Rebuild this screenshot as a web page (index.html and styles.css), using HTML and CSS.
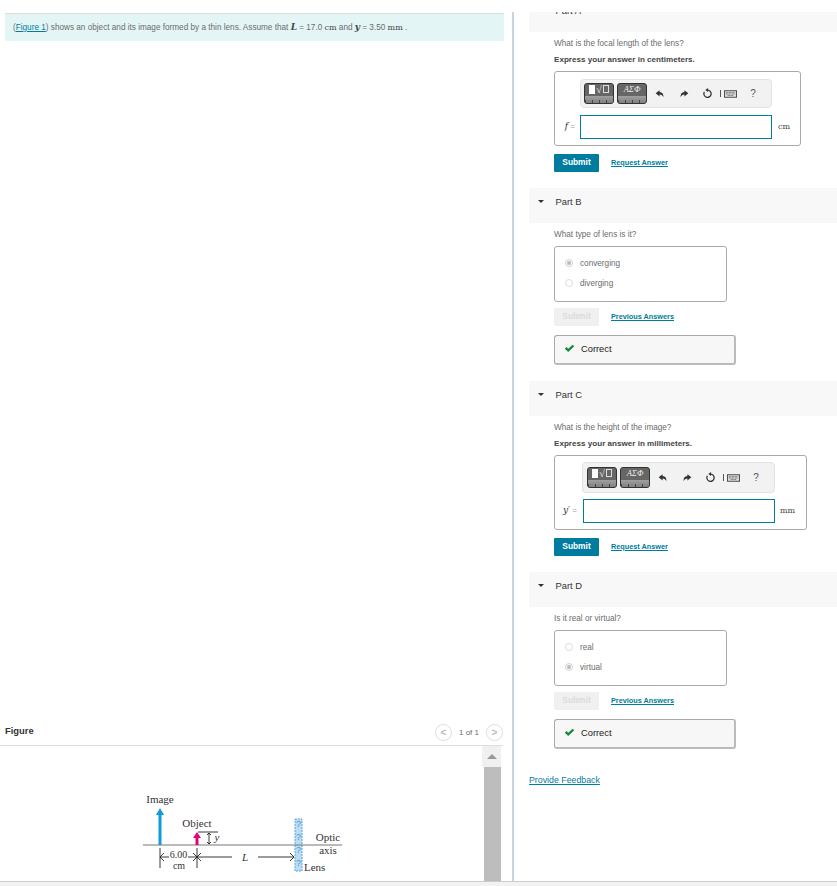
FILE: index.html
```html
<!DOCTYPE html>
<html lang="en">
<head>
    <meta charset="UTF-8">
    <meta name="viewport" content="width=device-width, initial-scale=1.0">
    <title>Thin Lens Problem</title>
    <link rel="stylesheet" href="styles.css">
</head>
<body>
    <svg class="defs" width="0" height="0">
        <symbol id="i-undo" viewBox="0 0 12 12"><path d="M5.5 1.5 0.8 5.2 5.5 8.9V6.6c2.4 0 3.6 1 4.6 3.4 0.4-3.6-1.2-6-4.6-6.3z"/></symbol>
        <symbol id="i-redo" viewBox="0 0 12 12"><path d="M6.5 1.5 11.2 5.2 6.5 8.9V6.6c-2.4 0-3.6 1-4.6 3.4-0.4-3.6 1.2-6 4.6-6.3z"/></symbol>
        <symbol id="i-reset" viewBox="0 0 12 12"><path d="M6 2.2a4 4 0 1 1-3.4 1.9" fill="none" stroke="currentColor" stroke-width="1.4"/><path d="M6.6 0 6.6 4.4 3.6 2.2z"/></symbol>
        <symbol id="i-keys" viewBox="0 0 14 8"><rect x="0.5" y="0.5" width="13" height="7" fill="#ddd" stroke="#444"/><path d="M2 2.5h10M2 4h10M4 5.6h6" stroke="#666" stroke-dasharray="1 .6"/></symbol>
        <symbol id="i-check" viewBox="0 0 12 10"><path d="M0.8 5.2 2.6 3.4 4.6 5.4 9.6 0.8 11.2 2.4 4.6 9z"/></symbol>
    </svg>

    <div class="page">
        <div class="left">
            <div class="intro">
                (<a href="#">Figure 1</a>) shows an object and its image formed by a thin lens. Assume that
                <span class="math math-i">L</span> = 17.0 <span class="math">cm</span> and
                <span class="math math-i">y</span> = 3.50 <span class="math">mm</span> .
            </div>

            <div class="figure">
                <div class="figure-head">
                    <span class="figure-title">Figure</span>
                    <div class="pager">
                        <span class="pager-btn">&lt;</span>
                        <span class="pager-count">1 of 1</span>
                        <span class="pager-btn">&gt;</span>
                    </div>
                </div>
                <div class="figure-body">
                    <svg class="diagram" width="482" height="135" viewBox="0 746 482 135">
                        <g class="dia-text">
                            <text x="160" y="803" text-anchor="middle">Image</text>
                            <text x="197" y="827" text-anchor="middle">Object</text>
                            <text x="217" y="841" text-anchor="middle" class="dia-var">y</text>
                            <text x="328" y="841" text-anchor="middle">Optic</text>
                            <text x="328" y="854" text-anchor="middle">axis</text>
                            <text x="178.5" y="857.5" text-anchor="middle" class="dia-dim">6.00</text>
                            <text x="179" y="869" text-anchor="middle" class="dia-dim">cm</text>
                            <text x="245" y="861" text-anchor="middle" class="dia-var">L</text>
                            <text x="304" y="871">Lens</text>
                        </g>
                        <rect x="295" y="819" width="7" height="52" fill="#bcdcf2" stroke="#5aa7dc" stroke-dasharray="2 1"/>
                        <g class="dia-q">
                            <text x="298.5" y="827" text-anchor="middle">?</text>
                            <text x="298.5" y="840" text-anchor="middle">?</text>
                            <text x="298.5" y="853" text-anchor="middle">?</text>
                            <text x="298.5" y="866" text-anchor="middle">?</text>
                        </g>
                        <path d="M143 845H342" stroke="#777" stroke-width="1.2"/>
                        <path d="M158.5 845V813H161.5V845z" fill="#0f9ad8"/>
                        <path d="M160 808 164 815H156z" fill="#0f9ad8"/>
                        <path d="M195.5 845V837H198.5V845z" fill="#e6007e"/>
                        <path d="M197 832 201 838H193z" fill="#e6007e"/>
                        <g fill="none" stroke="#222" stroke-width="0.9">
                            <path d="M198 832H218"/>
                            <path d="M209 833V844M207 835 209 833 211 835M207 842 209 844 211 842"/>
                            <path d="M160 848V868M197 848V868"/>
                            <path d="M160 857H169M164 853 160 857 164 861"/>
                            <path d="M188 857H197M193 853 197 857 193 861"/>
                            <path d="M197 857H232M201 853 197 857 201 861"/>
                            <path d="M258 857H294M290 853 294 857 290 861"/>
                        </g>
                    </svg>
                    <div class="scrollbar">
                        <div class="scroll-up"></div>
                        <div class="scroll-thumb"></div>
                    </div>
                </div>
            </div>
        </div>

        <div class="right">
            <div class="parts">
                <section class="part">
                    <div class="part-head"><span class="caret"></span>Part A</div>
                    <div class="part-body">
                        <p class="question">What is the focal length of the lens?</p>
                        <p class="express">Express your answer in centimeters.</p>
                        <div class="answer answer-a">
                            <div class="toolbar">
                                <span class="tpl-btn"><span class="tpl-cursor"></span>√<span class="tpl-box"></span></span>
                                <span class="tpl-btn tpl-greek">ΑΣΦ</span>
                                <span class="tool tool-undo"><svg width="10" height="10"><use href="#i-undo"/></svg></span>
                                <span class="tool"><svg width="10" height="10"><use href="#i-redo"/></svg></span>
                                <span class="tool tool-reset"><svg width="11" height="11"><use href="#i-reset"/></svg></span>
                                <span class="tool tool-keys"><i class="tool-sep"></i><svg width="13" height="8"><use href="#i-keys"/></svg></span>
                                <span class="tool tool-help">?</span>
                            </div>
                            <span class="var-label"><i class="math math-i">f</i> =</span>
                            <input class="answer-input" type="text">
                            <span class="unit">cm</span>
                        </div>
                        <div class="actions">
                            <button class="submit">Submit</button>
                            <a class="action-link" href="#">Request Answer</a>
                        </div>
                    </div>
                </section>

                <section class="part">
                    <div class="part-head"><span class="caret"></span>Part B</div>
                    <div class="part-body">
                        <p class="question">What type of lens is it?</p>
                        <div class="choices">
                            <div class="choice"><span class="radio radio-on"></span>converging</div>
                            <div class="choice"><span class="radio"></span>diverging</div>
                        </div>
                        <div class="actions actions-tight">
                            <button class="submit" disabled>Submit</button>
                            <a class="action-link" href="#">Previous Answers</a>
                        </div>
                        <div class="result"><svg class="result-check" width="11" height="9"><use href="#i-check"/></svg>Correct</div>
                    </div>
                </section>

                <section class="part">
                    <div class="part-head"><span class="caret"></span>Part C</div>
                    <div class="part-body">
                        <p class="question">What is the height of the image?</p>
                        <p class="express">Express your answer in millimeters.</p>
                        <div class="answer answer-c">
                            <div class="toolbar">
                                <span class="tpl-btn"><span class="tpl-cursor"></span>√<span class="tpl-box"></span></span>
                                <span class="tpl-btn tpl-greek">ΑΣΦ</span>
                                <span class="tool tool-undo"><svg width="10" height="10"><use href="#i-undo"/></svg></span>
                                <span class="tool"><svg width="10" height="10"><use href="#i-redo"/></svg></span>
                                <span class="tool tool-reset"><svg width="11" height="11"><use href="#i-reset"/></svg></span>
                                <span class="tool tool-keys"><i class="tool-sep"></i><svg width="13" height="8"><use href="#i-keys"/></svg></span>
                                <span class="tool tool-help">?</span>
                            </div>
                            <span class="var-label"><i class="math math-i">y′</i> =</span>
                            <input class="answer-input" type="text">
                            <span class="unit">mm</span>
                        </div>
                        <div class="actions">
                            <button class="submit">Submit</button>
                            <a class="action-link" href="#">Request Answer</a>
                        </div>
                    </div>
                </section>

                <section class="part">
                    <div class="part-head"><span class="caret"></span>Part D</div>
                    <div class="part-body">
                        <p class="question">Is it real or virtual?</p>
                        <div class="choices">
                            <div class="choice"><span class="radio"></span>real</div>
                            <div class="choice"><span class="radio radio-on"></span>virtual</div>
                        </div>
                        <div class="actions actions-tight">
                            <button class="submit" disabled>Submit</button>
                            <a class="action-link" href="#">Previous Answers</a>
                        </div>
                        <div class="result"><svg class="result-check" width="11" height="9"><use href="#i-check"/></svg>Correct</div>
                    </div>
                </section>

                <a class="feedback" href="#">Provide Feedback</a>
            </div>
        </div>
    </div>
    <div class="bottom-bar"></div>
</body>
</html>
```

FILE: styles.css
```css
body {
    margin: 0;
    height: 886px;
    overflow: hidden;
    font-family: "Liberation Sans", Arial, sans-serif;
    font-size: 8px;
    color: #6c6c6c;
    background-color: #fff;
}

a {
    color: #007c9e;
}

.defs {
    display: block;
    height: 0;
}

.page {
    display: flex;
    height: 881px;
}

/* left column: statement and figure */
.left {
    width: 512px;
    flex: none;
    display: flex;
    flex-direction: column;
    justify-content: space-between;
}

.intro {
    margin: 13px 8px 0 5px;
    height: 27px;
    padding-left: 8px;
    line-height: 27px;
    font-size: 8.2px;
    white-space: nowrap;
    background-color: #e4f5f6;
    border-top: 1px solid #ddd;
}

.math {
    font-family: "DejaVu Serif", "Liberation Serif", serif;
    font-size: 8px;
    color: #444;
    font-style: normal;
}

.math-i {
    font-size: 9px;
    font-style: italic;
    font-weight: bold;
}

.figure {
    margin-right: 9px;
}

.figure-head {
    display: flex;
    justify-content: space-between;
    align-items: center;
    height: 24px;
    border-bottom: 1px solid #ddd;
}

.figure-title {
    margin: -5px 0 0 5px;
    font-size: 9.4px;
    font-weight: bold;
    color: #333;
}

.pager {
    display: flex;
    align-items: center;
    gap: 7px;
    margin-top: -1px;
}

.pager-btn {
    width: 15px;
    height: 15px;
    border: 1px solid #ddd;
    border-radius: 50%;
    text-align: center;
    line-height: 15px;
    font-size: 10px;
    font-weight: bold;
    color: #bbb;
}

.pager-count {
    font-size: 8px;
}

.figure-body {
    display: flex;
    height: 135px;
    overflow: hidden;
}

.diagram {
    display: block;
    flex: none;
}

.dia-text {
    font-family: "Liberation Serif", serif;
    font-size: 11px;
    fill: #333;
}

.dia-var {
    font-style: italic;
}

.dia-dim {
    font-size: 10px;
}

.dia-q {
    font-family: "Liberation Sans", sans-serif;
    font-size: 9px;
    fill: #4a9ad4;
}

.scrollbar {
    flex: none;
    width: 19px;
    display: flex;
    flex-direction: column;
    align-items: flex-end;
    background: linear-gradient(#f0f0f0 21px, #fff 21px);
}

.scroll-up {
    width: 0;
    height: 0;
    margin: 8px 4px 8px 0;
    border-left: 5px solid transparent;
    border-right: 5px solid transparent;
    border-bottom: 5px solid #999;
}

.scroll-thumb {
    width: 17px;
    flex: 1;
    background-color: #bdbdbd;
}

/* right column: the parts */
.right {
    flex: none;
    width: 325px;
    box-sizing: border-box;
    margin-top: 12px;
    padding-left: 15px;
    border-left: 2px solid #c5d5e2;
    overflow: hidden;
}

/* panel is scrolled, so Part A's head is cut off at the top */
.parts {
    margin-top: -15px;
}

.part-head {
    display: flex;
    align-items: flex-start;
    height: 35px;
    padding-top: 8px;
    box-sizing: border-box;
    font-size: 9.4px;
    color: #333;
    background-color: #f8f8f8;
}

.caret {
    width: 0;
    height: 0;
    margin: 4px 11.5px 0 9px;
    border-left: 3px solid transparent;
    border-right: 3px solid transparent;
    border-top: 3px solid #333;
}

.part-body {
    padding: 6px 0 16px 25px;
}

.question,
.express {
    margin: 0;
    line-height: 11px;
    font-size: 8.2px;
}

.express {
    margin-top: 5px;
    font-size: 8.1px;
    font-weight: bold;
    color: #444;
}

/* answer box */
.answer {
    display: grid;
    grid-template-columns: var(--label-w) 192px auto;
    align-items: center;
    box-sizing: border-box;
    width: var(--box-w);
    height: 75px;
    margin-top: 6px;
    padding: var(--box-pad) 0 6px;
    border: 1px solid #aaa;
    border-radius: 3px;
}

.answer-a {
    --label-w: 25px;
    --box-w: 247px;
    --box-pad: 7px;
    --tool-h: 29px;
    --tool-w: 192px;
    --row-gap: 7px;
    --btn-left: 3px;
    --input-left: 0;
}

.answer-c {
    --label-w: 27px;
    --box-w: 253px;
    --box-pad: 6px;
    --tool-h: 31px;
    --tool-w: 193px;
    --row-gap: 6px;
    --btn-left: 4px;
    --input-left: 1px;
}

.toolbar {
    grid-column: 2 / 4;
    display: flex;
    align-items: center;
    box-sizing: border-box;
    width: var(--tool-w);
    height: var(--tool-h);
    margin-bottom: var(--row-gap);
    padding-left: var(--btn-left);
    background-color: #f2f2f2;
    border: 1px solid #e2e2e2;
    border-radius: 4px;
}

.tpl-btn {
    position: relative;
    display: flex;
    align-items: flex-start;
    justify-content: center;
    gap: 1px;
    box-sizing: border-box;
    width: 30px;
    height: 21px;
    margin-right: 3px;
    padding-top: 1px;
    font-family: "Liberation Serif", serif;
    font-size: 10px;
    line-height: 9px;
    color: #eee;
    background-color: #666;
    border: 1px solid #333;
    border-radius: 3px;
}

/* ruler strip along the foot of the template buttons */
.tpl-btn::after {
    content: "";
    position: absolute;
    left: 0;
    right: 0;
    bottom: 0;
    height: 7px;
    background: repeating-linear-gradient(90deg, #444 0 1px, transparent 1px 7px) bottom / 100% 3px no-repeat, linear-gradient(#a0a0a0, #808080);
    border-radius: 0 0 2px 2px;
}

.tpl-cursor {
    width: 6px;
    height: 9px;
    background-color: #fff;
}

.tpl-box {
    box-sizing: border-box;
    width: 6px;
    height: 8px;
    border: 1px solid #ddd;
}

.tpl-greek {
    font-style: italic;
    font-size: 8.5px;
}

.tool {
    display: flex;
    justify-content: center;
    align-items: center;
    width: 24px;
    color: #333;
    fill: #333;
}

.tool-undo {
    margin-left: -2px;
}

.tool-reset {
    width: 23px;
}

.tool-keys {
    gap: 3px;
    width: 19px;
}

.tool-sep {
    width: 1px;
    height: 7px;
    background-color: #555;
}

.tool-help {
    width: 30px;
    font-size: 10px;
    color: #555;
}

.var-label {
    margin-bottom: 2px;
    padding-right: 5px;
    text-align: right;
    font-size: 8px;
    color: #999;
}

.var-label .math {
    font-weight: normal;
    color: #333;
}

.answer-input {
    box-sizing: border-box;
    width: 192px;
    height: 24px;
    margin-left: var(--input-left);
    padding: 0;
    border: 1px solid #007c9e;
    border-radius: 0;
    outline: none;
}

.unit {
    margin: 0 0 2px 6px;
    font-family: "DejaVu Serif", serif;
    font-size: 8px;
    color: #444;
}

/* submit row */
.actions {
    display: flex;
    align-items: center;
    gap: 12px;
    margin-top: 8px;
}

.actions-tight {
    margin-top: 6px;
}

.submit {
    width: 45px;
    height: 18px;
    padding: 0 0 2px;
    font-family: inherit;
    font-size: 8.4px;
    font-weight: bold;
    color: #fff;
    background-color: #007c9e;
    border: none;
    border-radius: 1px;
}

.submit:disabled {
    color: #dcdcdc;
    background-color: #f0f0f0;
}

.action-link {
    margin-bottom: 2px;
    font-size: 7.3px;
    font-weight: bold;
}

/* multiple choice */
.choices {
    box-sizing: border-box;
    width: 173px;
    height: 56px;
    margin-top: 6px;
    padding-top: 6px;
    border: 1px solid #aaa;
    border-radius: 3px;
}

.choice {
    display: flex;
    align-items: center;
    height: 20px;
    padding-left: 10px;
    font-size: 8.2px;
}

.radio {
    box-sizing: border-box;
    width: 8px;
    height: 8px;
    margin-right: 7px;
    border: 1px solid #ddd;
    border-radius: 50%;
    background-color: #fff;
}

.radio-on {
    background-color: #bbb;
    box-shadow: inset 0 0 0 1px #fff;
}

.result {
    display: flex;
    align-items: center;
    box-sizing: border-box;
    width: 182px;
    height: 30px;
    margin-top: 9px;
    padding: 0 0 2px 9px;
    font-size: 9.3px;
    color: #222;
    background-color: #f7f7f7;
    border: 1px solid #aaa;
    border-right: 2px solid #bbb;
    border-bottom: 2px solid #bbb;
    border-radius: 3px;
}

.result-check {
    margin-right: 6px;
    fill: #10893e;
}

.feedback {
    display: block;
    margin-top: -8px;
    padding-top: 18px;
    font-size: 8.8px;
}

.bottom-bar {
    height: 4px;
    background-color: #f2f2f2;
    border-top: 1px solid #ccc;
}
```
